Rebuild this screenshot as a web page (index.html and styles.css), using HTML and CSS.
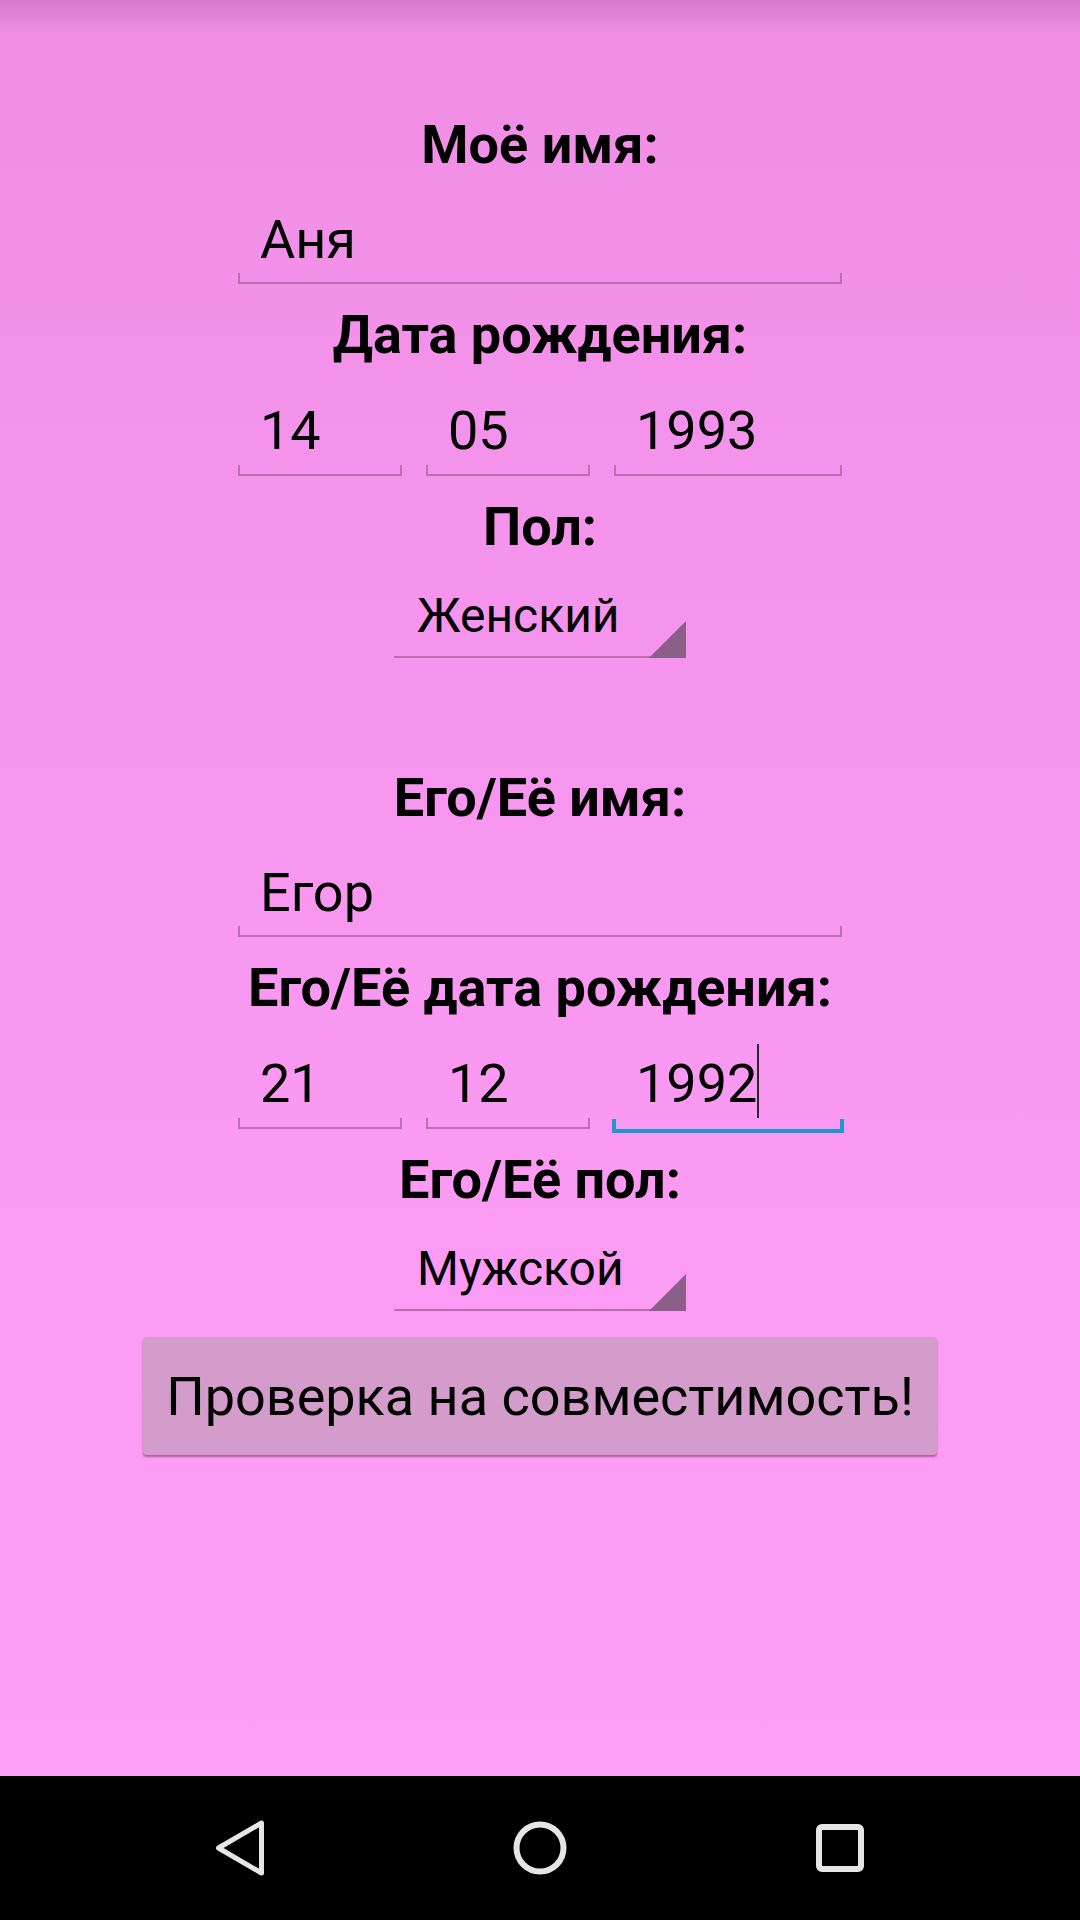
FILE: index.html
```html
<!DOCTYPE html>
<html lang="ru">
<head>
<meta charset="utf-8">
<title>Совместимость</title>
<link rel="stylesheet" href="styles.css">
</head>
<body>
<main class="screen">
  <div class="label">Моё имя:</div>
  <div class="field wide">
    <div class="value">Аня</div>
    <div class="line"></div>
  </div>

  <div class="label">Дата рождения:</div>
  <div class="row">
    <div class="field short"><div class="value">14</div><div class="line"></div></div>
    <div class="field short"><div class="value">05</div><div class="line"></div></div>
    <div class="field year"><div class="value">1993</div><div class="line"></div></div>
  </div>

  <div class="label">Пол:</div>
  <div class="spinner">Женский</div>

  <div class="label second">Его/Её имя:</div>
  <div class="field wide">
    <div class="value">Егор</div>
    <div class="line"></div>
  </div>

  <div class="label">Его/Её дата рождения:</div>
  <div class="row">
    <div class="field short"><div class="value">21</div><div class="line"></div></div>
    <div class="field short"><div class="value">12</div><div class="line"></div></div>
    <div class="field year active"><div class="value">1992<span class="cursor"></span></div><div class="line"></div></div>
  </div>

  <div class="label">Его/Её пол:</div>
  <div class="spinner">Мужской</div>

  <button class="check">Проверка на совместимость!</button>
</main>
<nav class="navbar">
  <div class="navslot">
    <svg width="60" height="60" viewBox="0 0 60 60"><polygon points="51.5,5 51.5,55 8.5,30" fill="none" stroke="#e6e6e6" stroke-width="5" stroke-linejoin="round"/></svg>
  </div>
  <div class="navslot">
    <svg width="60" height="60" viewBox="0 0 60 60"><circle cx="30" cy="30" r="23.5" fill="none" stroke="#e6e6e6" stroke-width="6"/></svg>
  </div>
  <div class="navslot">
    <svg width="60" height="60" viewBox="0 0 60 60"><rect x="9" y="9" width="42" height="42" rx="3" fill="none" stroke="#e6e6e6" stroke-width="6"/></svg>
  </div>
</nav>
</body>
</html>
```

FILE: styles.css
```css
html, body {
  margin: 0;
  padding: 0;
}

body {
  width: 1080px;
  height: 1920px;
  overflow: hidden;
  font-family: Roboto, "Noto Sans", "Liberation Sans", sans-serif;
  color: #000;
  background: #000;
}

.screen {
  height: 1776px;
  box-sizing: border-box;
  padding-top: 113px;
  display: flex;
  flex-direction: column;
  align-items: center;
  background:
    linear-gradient(to bottom, rgba(60, 0, 50, 0.14), rgba(60, 0, 50, 0) 34px),
    linear-gradient(to bottom, #f08ee6, #ffa0f8);
}

.label {
  height: 64px;
  line-height: 64px;
  font-size: 54px;
  font-weight: 700;
  text-align: center;
  white-space: nowrap;
}

.label.second {
  margin-top: 108px;
}

.field {
  display: flex;
  flex-direction: column;
  margin-bottom: 19px;
}

.field.wide {
  width: 604px;
}

.row {
  width: 604px;
  display: flex;
  gap: 24px;
  margin-bottom: 19px;
}

.row .field {
  margin-bottom: 0;
}

.field.short {
  width: 164px;
}

.field.year {
  width: 228px;
}

.value {
  height: 96px;
  box-sizing: border-box;
  padding: 31px 0 0 22px;
  font-size: 54px;
  line-height: 64px;
  white-space: nowrap;
}

.row .value {
  height: 98px;
  padding-top: 32px;
}

.line {
  height: 9px;
  border: 2px solid #bd6db3;
  border-top: none;
}

.field.active .line {
  height: 10px;
  margin: 1px -2px -4px;
  border-width: 0 4px 4px;
  border-color: #2196cf;
}

.cursor {
  display: inline-block;
  width: 2px;
  height: 74px;
  background: #2a2a2a;
  vertical-align: -13px;
  margin-top: -20px;
  margin-bottom: -3px;
}

.spinner {
  position: relative;
  width: 292px;
  height: 99px;
  box-sizing: border-box;
  padding: 29px 0 0 23px;
  border-bottom: 2px solid #bd6db3;
  font-size: 48px;
  line-height: 56px;
  white-space: nowrap;
}

.spinner::after {
  content: "";
  position: absolute;
  right: 0;
  bottom: -2px;
  width: 37px;
  height: 37px;
  background: #8c5f88;
  clip-path: polygon(100% 0, 100% 100%, 0 100%);
}

.check {
  margin-top: 26px;
  width: 794px;
  height: 118px;
  border: none;
  border-radius: 4px;
  background: #d49ccb;
  box-shadow: 0 2px 2px rgba(70, 20, 60, 0.45);
  font-family: Roboto, "Noto Sans", "Liberation Sans", sans-serif;
  font-size: 54px;
  color: #000;
  padding: 0;
  white-space: nowrap;
}

.navbar {
  height: 144px;
  background: #000;
  display: flex;
  padding: 0 90px;
}

.navslot {
  width: 300px;
  display: flex;
  align-items: center;
  justify-content: center;
}

.navslot svg {
  display: block;
}
```
